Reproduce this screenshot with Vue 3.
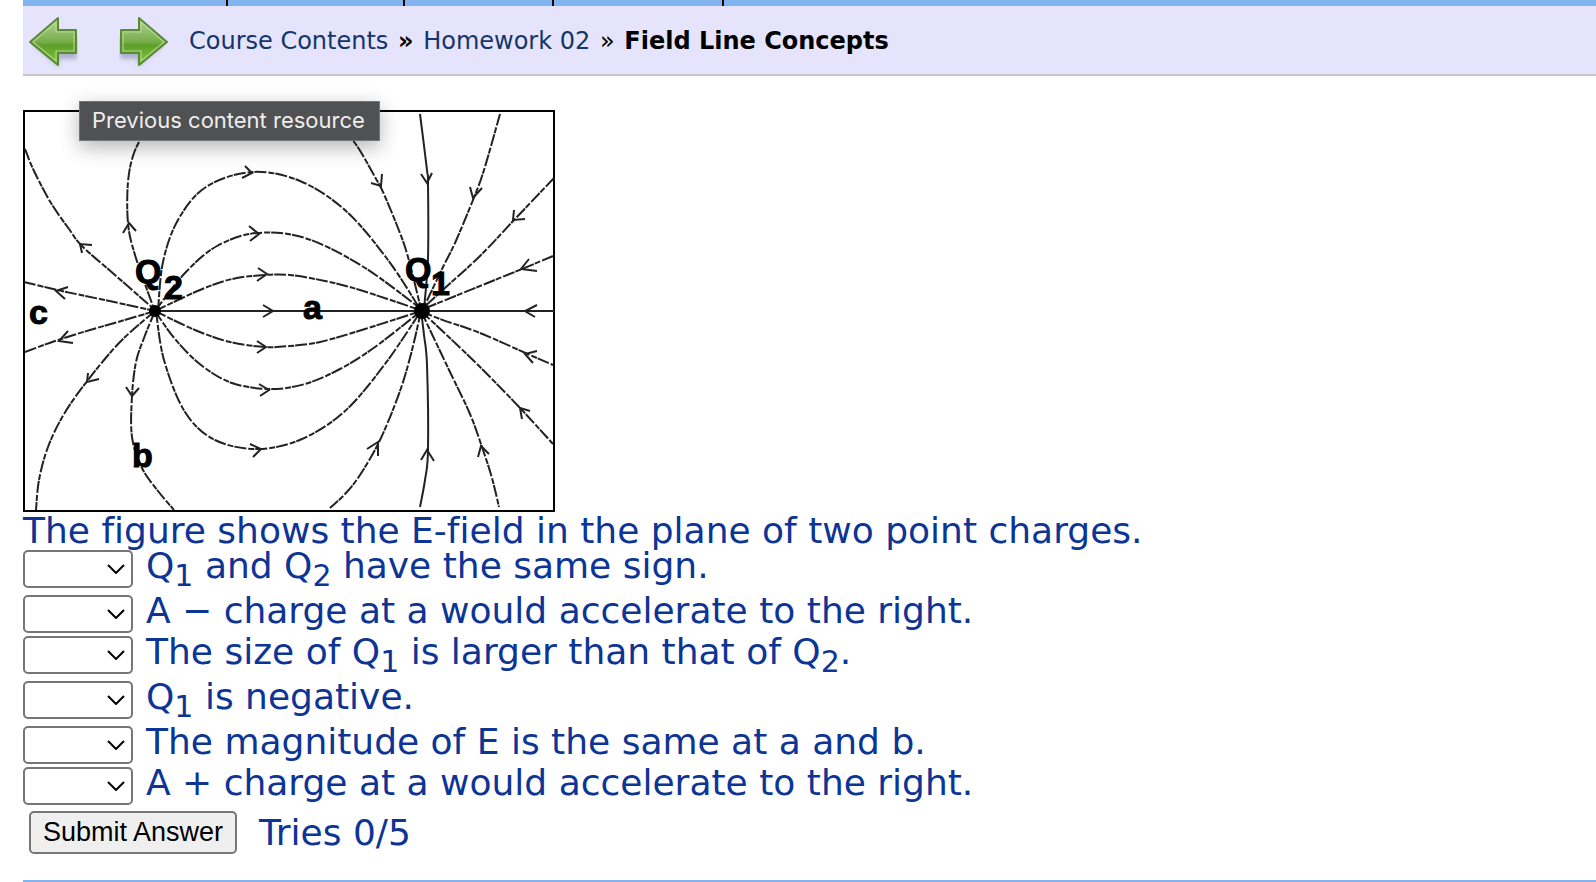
<script setup>
import { reactive, ref } from 'vue';

const tabs = ['tab-a', 'tab-b', 'tab-c', 'tab-d']

// plain strings are normal text, { low } is a subscript
const statements = [
  { id: 1, parts: ['Q', { low: '1' }, ' and Q', { low: '2' }, ' have the same sign.'] },
  { id: 2, parts: ['A − charge at a would accelerate to the right.'] },
  { id: 3, parts: ['The size of Q', { low: '1' }, ' is larger than that of Q', { low: '2' }, '.'] },
  { id: 4, parts: ['Q', { low: '1' }, ' is negative.'] },
  { id: 5, parts: ['The magnitude of E is the same at a and b.'] },
  { id: 6, parts: ['A + charge at a would accelerate to the right.'] }
]

const answers = reactive({ 1: '', 2: '', 3: '', 4: '', 5: '', 6: '' })
const tries = ref(0)
const maxTries = 5

const hasLow = (item) => item.parts.some((p) => p.low)

const submitAnswer = () => {
  if (tries.value < maxTries) {
    tries.value++
  }
}

// each line: the points it runs through
const fieldLines = [
  [[25, 149], [34, 171], [51, 203], [69, 229], [82, 246], [115, 275], [155, 310]],
  [[146, 130], [134, 153], [128, 182], [128, 223], [135, 255], [154, 309]],
  [[158, 311], [163, 262], [178, 220], [206, 187], [252, 172], [300, 181], [346, 211], [388, 260], [420, 309]],
  [[155, 311], [185, 273], [217, 246], [257, 233], [305, 238], [362, 266], [420, 308]],
  [[155, 311], [200, 290], [232, 279], [265, 275], [290, 275], [325, 281], [360, 290], [420, 310]],
  [[24, 282], [62, 291], [100, 299], [155, 311]],
  [[25, 352], [55, 341], [90, 330], [118, 322], [155, 311]],
  [[155, 311], [120, 342], [88, 380], [64, 414], [48, 447], [39, 480], [36, 510]],
  [[155, 311], [144, 338], [136, 362], [132, 396], [132, 437], [142, 468], [158, 491], [174, 510]],
  [[156, 311], [164, 360], [185, 412], [215, 440], [258, 449], [302, 439], [345, 411], [385, 364], [421, 311]],
  [[155, 311], [175, 339], [201, 365], [232, 383], [270, 389], [305, 384], [340, 369], [375, 347], [421, 311]],
  [[155, 311], [195, 330], [230, 342], [265, 347], [290, 346], [320, 342], [365, 329], [421, 311]],
  [[345, 130], [359, 149], [375, 177], [383, 192], [398, 228], [408, 257], [421, 309]],
  [[500, 114], [484, 170], [473, 200], [455, 243], [443, 267], [423, 309]],
  [[554, 178], [515, 219], [480, 256], [445, 288], [421, 310]],
  [[553, 256], [522, 269], [480, 286], [421, 310]],
  [[421, 311], [440, 319], [480, 333], [530, 355], [553, 365]],
  [[421, 311], [475, 362], [520, 408], [553, 444]],
  [[421, 311], [450, 372], [470, 414], [483, 450], [492, 478], [499, 507]],
  [[421, 311], [412, 350], [400, 391], [380, 440], [360, 475], [345, 494], [330, 508]]
]

const solidLines = [
  [[155, 311], [554, 311]],
  [[420, 114], [427, 170], [428, 183], [428, 258], [424, 309]],
  [[421, 311], [424, 335], [427, 365], [428, 450], [425, 480], [420, 507]]
]

// arrow heads: barb, tip, barb
const heads = [
  [[92, 245], [80, 244], [82, 253]],
  [[123, 233], [129, 223], [136, 231]],
  [[245, 166], [252, 173], [242, 178]],
  [[249, 226], [259, 234], [250, 241]],
  [[258, 268], [267, 274], [257, 281]],
  [[263, 305], [273, 311], [263, 317]],
  [[537, 305], [525, 311], [535, 317]],
  [[68, 287], [56, 291], [65, 299]],
  [[68, 331], [59, 341], [73, 343]],
  [[88, 373], [87, 382], [99, 379]],
  [[126, 387], [132, 396], [139, 388]],
  [[250, 444], [261, 449], [253, 457]],
  [[259, 384], [269, 390], [260, 396]],
  [[257, 341], [266, 347], [257, 353]],
  [[382, 174], [381, 186], [371, 183]],
  [[421, 174], [427, 183], [432, 173]],
  [[470, 187], [473, 198], [482, 188]],
  [[514, 210], [513, 220], [525, 219]],
  [[529, 259], [521, 269], [537, 271]],
  [[537, 351], [525, 354], [533, 363]],
  [[522, 419], [520, 408], [530, 411]],
  [[478, 457], [481, 446], [489, 454]],
  [[421, 460], [427, 450], [434, 461]],
  [[367, 449], [378, 442], [378, 456]]
]

// smooth curve through all points
const curve = (pts) => {
  let d = `M${pts[0].join(' ')}`
  for (let i = 0; i < pts.length - 1; i++) {
    const a = pts[i - 1] || pts[i]
    const b = pts[i]
    const c = pts[i + 1]
    const e = pts[i + 2] || c
    d += ` C${b[0] + (c[0] - a[0]) / 6} ${b[1] + (c[1] - a[1]) / 6}`
    d += ` ${c[0] - (e[0] - b[0]) / 6} ${c[1] - (e[1] - b[1]) / 6} ${c[0]} ${c[1]}`
  }
  return d
}
</script>

<template>
  <div class="page">
    <div class="tab-strip">
      <span v-for="tab in tabs" :key="tab" class="tab" :class="tab"></span>
    </div>

    <nav class="crumb-bar">
      <a href="#" class="arrow-link" aria-label="Previous content resource">
        <svg class="arrow-icon" viewBox="0 0 50 54">
          <defs>
            <linearGradient id="green" x1="0" y1="0" x2="0" y2="1">
              <stop offset="0" stop-color="#b4d59b" />
              <stop offset="0.5" stop-color="#78ae4b" />
              <stop offset="0.58" stop-color="#5f9f2a" />
              <stop offset="1" stop-color="#83c840" />
            </linearGradient>
            <filter id="soft" x="-20%" y="-20%" width="140%" height="140%">
              <feGaussianBlur stdDeviation="2" />
            </filter>
          </defs>
          <path d="M5 29 L31 51 V43 H49 V21 H31 Z" fill="#8f8fae" opacity="0.6" filter="url(#soft)" />
          <path d="M2 26 L30 2 V14 H48 V37 H30 V49 Z" fill="url(#green)" stroke="#5a8a37" stroke-width="2" stroke-linejoin="round" />
          <path d="M5 26 L28 6 V16 H46 V35 H28 V45 Z" fill="none" stroke="#b9dc95" stroke-width="1.2" opacity="0.8" />
        </svg>
        <span class="tooltip" role="tooltip">Previous content resource</span>
      </a>
      <a href="#" class="arrow-link" aria-label="Next content resource">
        <svg class="arrow-icon" viewBox="0 0 50 54">
          <path d="M45 29 L19 51 V43 H1 V21 H19 Z" fill="#8f8fae" opacity="0.6" filter="url(#soft)" />
          <path d="M48 26 L20 2 V14 H2 V37 H20 V49 Z" fill="url(#green)" stroke="#5a8a37" stroke-width="2" stroke-linejoin="round" />
          <path d="M45 26 L22 6 V16 H4 V35 H22 V45 Z" fill="none" stroke="#b9dc95" stroke-width="1.2" opacity="0.8" />
        </svg>
      </a>
      <div class="crumbs">
        <a href="#">Course Contents</a> <b class="sep">»</b> <a href="#">Homework 02</a> <span class="sep">»</span> <b>Field Line Concepts</b>
      </div>
    </nav>

    <main class="problem">
      <svg class="figure" viewBox="23 110 532 402" role="img" aria-label="Electric field lines of two point charges">
        <rect x="24" y="111" width="530" height="400" class="frame" />
        <path v-for="(line, i) in fieldLines" :key="'f' + i" :d="curve(line)" class="line dashed" />
        <path v-for="(line, i) in solidLines" :key="'s' + i" :d="curve(line)" class="line" />
        <polyline v-for="(head, i) in heads" :key="'h' + i" :points="head.join(' ')" class="line" />
        <circle cx="155" cy="311" r="6" />
        <circle cx="422" cy="311" r="8" />
        <text x="135" y="283">Q</text>
        <text x="164" y="299">2</text>
        <text x="405" y="281">Q</text>
        <text x="431" y="295">1</text>
        <text x="303" y="319">a</text>
        <text x="29" y="324">c</text>
        <text x="132" y="467">b</text>
      </svg>

      <form @submit.prevent="submitAnswer">
        <p class="intro">The figure shows the E-field in the plane of two point charges.</p>

        <div v-for="item in statements" :key="item.id" class="statement" :class="{ tall: hasLow(item) }">
          <span class="select-box">
            <select :id="'answer' + item.id" v-model="answers[item.id]">
              <option value=""></option>
              <option value="true">True</option>
              <option value="false">False</option>
            </select>
            <svg class="chevron" viewBox="0 0 18 10">
              <path d="M1 1 L9 9 L17 1" />
            </svg>
          </span>
          <label :for="'answer' + item.id"><template v-for="(part, i) in item.parts" :key="i"><sub v-if="part.low">{{ part.low }}</sub><template v-else>{{ part }}</template></template></label>
        </div>

        <div class="submit-row">
          <button type="submit" class="submit-btn">Submit Answer</button>
          <span>Tries {{ tries }}/{{ maxTries }}</span>
        </div>
      </form>
    </main>
  </div>
</template>

<style>
body {
  margin: 0;
  background: #fff;
}
</style>

<style scoped>
.page {
  margin-left: 23px;
  font-family: Verdana, "DejaVu Sans", sans-serif;
  font-variant-ligatures: none;
}

.tab-strip {
  display: flex;
  height: 6px;
  background: #84b4f0;
}

.tab {
  box-sizing: border-box;
  border-right: 2px solid #000;
}

.tab-a {
  width: 205px;
}

.tab-b {
  width: 177px;
}

.tab-c {
  width: 149px;
}

.tab-d {
  width: 170px;
}

/* Breadcrumbs */
.crumb-bar {
  display: flex;
  align-items: center;
  box-sizing: border-box;
  height: 70px;
  padding: 6px 0 0 5px;
  background: #e5e4fc;
  border-bottom: 2px solid #c6c6c6;
}

.arrow-link {
  position: relative;
  display: block;
  margin-right: 41px;
}

.arrow-icon {
  display: block;
  width: 50px;
  height: 54px;
}

.arrow-link + .crumbs {
  margin-left: -21px;
}

.crumbs {
  padding-bottom: 4px;
  color: #000;
  font-size: 24px;
  line-height: 32px;
  white-space: nowrap;
}

.crumbs a {
  color: #12356b;
  text-decoration: none;
}

.sep {
  margin: 0 2px;
}

.tooltip {
  position: absolute;
  left: 51px;
  top: 85px;
  box-sizing: border-box;
  height: 40px;
  padding: 0 14px 0 12px;
  border: 1px solid #747576;
  background: #505153;
  color: #eee;
  font-family: Inter, sans-serif;
  font-size: 22px;
  line-height: 36px;
  white-space: nowrap;
  box-shadow: 0 6px 20px rgba(0, 0, 0, 0.3);
  z-index: 2;
}

/* Problem */
.problem {
  padding-top: 34px;
  padding-bottom: 26px;
  border-bottom: 2px solid #84b4f0;
  color: #0c3596;
  font-size: 36px;
}

.figure {
  display: block;
  width: 532px;
  height: 402px;
}

.figure text {
  font: bold 34px "Liberation Sans", Arial, sans-serif;
  fill: #000;
  stroke: #000;
  stroke-width: 1;
}

.frame {
  fill: #fff;
  stroke: #000;
  stroke-width: 2;
}

.line {
  fill: none;
  stroke: #222;
  stroke-width: 2;
}

.dashed {
  stroke-dasharray: 12 2 6 1;
}

.intro {
  margin: 0;
  line-height: 38px;
  white-space: nowrap;
}

.statement {
  display: flex;
  align-items: flex-start;
  gap: 13px;
  height: 41px;
  white-space: nowrap;
}

.statement.tall {
  height: 45px;
}

.statement label {
  line-height: 31px;
}

.statement sub {
  font-size: 30px;
  line-height: 0;
}

.select-box {
  position: relative;
  display: block;
  height: 38px;
}

.select-box select {
  appearance: none;
  display: block;
  box-sizing: border-box;
  width: 110px;
  height: 38px;
  border: 2px solid #767676;
  border-radius: 5px;
  background: #fff;
  font-size: 27px;
}

.chevron {
  position: absolute;
  right: 8px;
  top: 14px;
  width: 18px;
  height: 10px;
  pointer-events: none;
}

.chevron path {
  fill: none;
  stroke: #000;
  stroke-width: 2;
}

.submit-row {
  display: flex;
  align-items: center;
  gap: 22px;
  padding: 3px 0 0 6px;
}

.submit-btn {
  box-sizing: border-box;
  height: 43px;
  padding: 0 12px;
  border: 2px solid #767676;
  border-radius: 5px;
  background: #efefef;
  color: #000;
  font-family: "Liberation Sans", Arial, sans-serif;
  font-size: 27px;
  cursor: pointer;
}
</style>
